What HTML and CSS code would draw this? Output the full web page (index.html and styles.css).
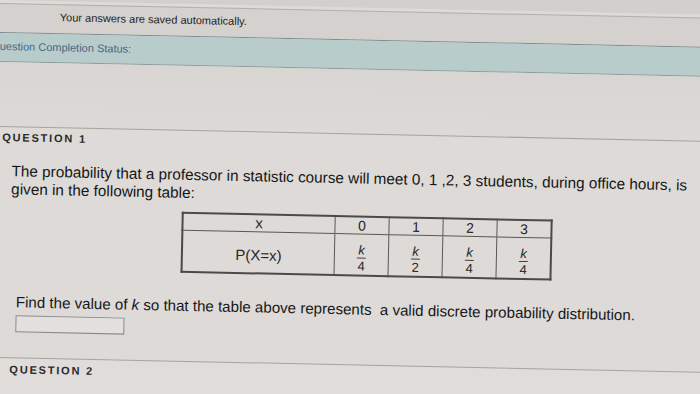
FILE: index.html
```html
<!DOCTYPE html>
<html>
<head>
<meta charset="utf-8">
<link rel="stylesheet" href="styles.css">
</head>
<body>
<div class="frame">
<div class="page">
  <div class="topbar">
    <div class="saved">Your answers are saved automatically.</div>
  </div>
  <div class="status">
    <div class="status-text">Question Completion Status:</div>
  </div>
  <div class="spacer"></div>
  <div class="question q1">
    <div class="qhead">QUESTION 1</div>
    <p class="qtext">The probability that a professor in statistic course will meet 0, 1 ,2, 3 students, during office hours, is given in the following table:</p>
    <table class="dist">
      <tr class="r1">
        <td class="lab">x</td><td>0</td><td>1</td><td>2</td><td>3</td>
      </tr>
      <tr class="r2">
        <td class="lab">P(X=x)</td>
        <td><span class="frac"><i>k</i><span>4</span></span></td>
        <td><span class="frac"><i>k</i><span>2</span></span></td>
        <td><span class="frac"><i>k</i><span>4</span></span></td>
        <td><span class="frac"><i>k</i><span>4</span></span></td>
      </tr>
    </table>
    <p class="find">Find the value of <i>k</i> so that the table above represents&nbsp; a valid discrete probability distribution.</p>
    <div class="answer"></div>
  </div>
  <div class="question q2">
    <div class="qhead">QUESTION 2</div>
  </div>
</div>
</div>
</body>
</html>
```
FILE: styles.css
```css
html, body {
  margin: 0;
  padding: 0;
}
body {
  background: #d3cfcc;
  font-family: "Liberation Sans", Arial, sans-serif;
  color: #1e1e1e;
}
.frame {
  width: 700px;
  height: 394px;
  overflow: hidden;
  background: #d3cfcc;
}
/* the reference is a slightly tilted photo of a screen */
.page {
  width: 780px;
  margin-left: -30px;
  display: flex;
  flex-direction: column;
  transform: rotate(1.2deg);
  transform-origin: 30px 200px;
  background: #dddad7;
}
.topbar {
  height: 28px;
  margin-top: 3px;
  border-top: 1px solid #b3afac;
  background: #d5d1ce;
  display: flex;
  align-items: center;
  border-bottom: 1px solid #7f8d8e;
}
.saved {
  margin-left: 86px;
  margin-top: -5px;
  font-size: 11px;
  color: #1e1e1e;
}
.status {
  height: 28px;
  background: #b9cccc;
  border-bottom: 1px solid #8e9c9c;
  display: flex;
  align-items: center;
}
.status-text {
  margin-left: 18px;
  margin-top: -2px;
  font-size: 11px;
  color: #466780;
}
.spacer {
  height: 64px;
  background: linear-gradient(#d8d5d2, #dcd9d6);
}
.question {
  border-top: 1px solid #a6a3a0;
  background: #dddad7;
}
.q1 {
  padding-bottom: 25px;
}
.qhead {
  font-size: 11px;
  line-height: 14px;
  font-weight: bold;
  letter-spacing: 1.8px;
  color: #2a2a2a;
  padding: 3px 0 0 31px;
}
.qtext {
  margin: 18px 0 0 41px;
  font-size: 15.3px;
  line-height: 18px;
  color: #161616;
  width: 690px;
}
.dist {
  margin: 10px 0 0 212px;
  border-collapse: collapse;
  border: 2px solid #4a4a4a;
  font-size: 14px;
  color: #262626;
}
.dist td {
  border: 1px solid #585858;
  text-align: center;
  padding: 0;
  width: 53px;
}
.dist td.lab {
  width: 151px;
  font-size: 15px;
}
.r1 td {
  height: 16px;
  line-height: 16px;
}
.r2 td {
  height: 41px;
  padding-top: 6px;
  box-sizing: border-box;
}
.frac {
  display: inline-flex;
  flex-direction: column;
  align-items: center;
  font-size: 13px;
  line-height: 13px;
}
.frac i {
  border-bottom: 1px solid #444;
  padding: 0 1px 1px;
}
.frac span {
  padding-top: 1px;
}
.find {
  margin: 24px 0 0 48px;
  font-size: 15.1px;
  line-height: 17px;
  color: #161616;
}
.answer {
  margin: 5px 0 0 48px;
  width: 107px;
  height: 15px;
  border: 1px solid #8a8a8a;
  background: #e3e1df;
}
.q2 {
  height: 60px;
  background: #dfdcd9;
}
.q2 .qhead {
  padding: 4px 0 0 43px;
}
```
